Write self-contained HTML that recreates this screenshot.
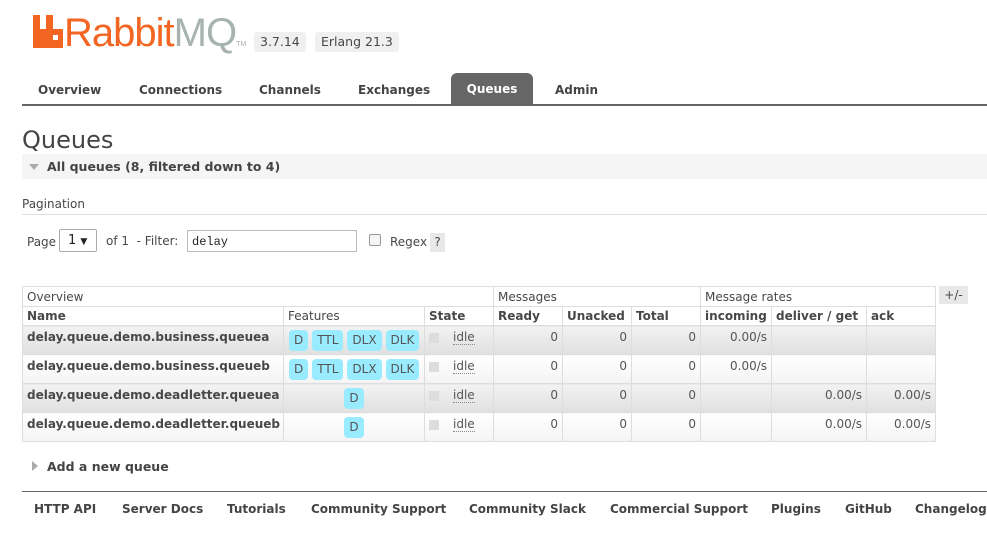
<!DOCTYPE html>
<html><head><meta charset="utf-8"><style>
*{margin:0;padding:0;box-sizing:border-box}
body{width:987px;height:535px;background:#fff;font-family:"DejaVu Sans","Liberation Sans",sans-serif;color:#484848;position:relative;overflow:hidden;font-size:12px}
.a{position:absolute;white-space:nowrap}
.logo{left:33px;top:13px;font-family:"Liberation Sans",sans-serif;font-size:40px;letter-spacing:-1px;line-height:40px}
.badge{top:32px;height:20px;background:#f0f0f0;border-radius:3px;font-size:12.5px;line-height:20px;padding:0 6px;color:#484848}
.nav{top:74px;height:32px;font-weight:bold;font-size:12px;line-height:32px;color:#444}
.navline{left:22px;top:104px;width:965px;height:2px;background:#666}
table{position:absolute;left:22px;top:286px;border-collapse:collapse;table-layout:fixed;width:913px}
td,th{border:1px solid #ddd;padding:0 4px;font-size:12px;white-space:nowrap;overflow:hidden}
th{text-align:left}
tr.h1 td{height:20px;font-weight:normal}
tr.h2 th{height:19px}
tr.r td{height:29px;vertical-align:top;padding-top:4px}
tr.g td{background:linear-gradient(#f2f2f2,#e0e0e0)}
tr.w td{background:linear-gradient(#fff,#f4f4f4)}
.n{text-align:right;color:#555}
.f{display:inline-block;background:#99ebff;border-radius:4px;height:21px;line-height:21px;padding:0 5px;margin-right:4px;color:#555;font-size:12px}
.st{display:inline-block;width:10px;height:10px;background:#ddd;margin-right:14px;vertical-align:-2px}
.idle{border-bottom:1px dotted #888;color:#555}
.foot{top:502px;font-weight:bold;font-size:12px;color:#444}
</style></head><body>
<div class="a logo"><svg width="30" height="33" viewBox="0 0 30 33" style="vertical-align:-2px;margin-right:1px"><path d="M0 0h7v14h6V0h7v14h0v0h0V14H30V33H0Z" fill="#f26522"/><rect x="20" y="20" width="5" height="5" fill="#fff"/></svg><span style="color:#f26522">Rabbit</span><span style="color:#a7b3ae">MQ</span><span style="font-size:7px;color:#aaa;letter-spacing:0">TM</span></div>
<div class="a badge" style="left:254px">3.7.14</div>
<div class="a badge" style="left:315px">Erlang 21.3</div>
<div class="a nav" style="left:38px">Overview</div>
<div class="a nav" style="left:139px">Connections</div>
<div class="a nav" style="left:259px">Channels</div>
<div class="a nav" style="left:358px">Exchanges</div>
<div class="a nav" style="left:451px;top:73px;height:32px;width:82px;background:#666;color:#fff;text-align:center;border-radius:6px 6px 0 0;line-height:33px">Queues</div>
<div class="a nav" style="left:555px">Admin</div>
<div class="a navline"></div>
<div class="a" style="left:22px;top:126px;font-size:24px;color:#444">Queues</div>
<div class="a" style="left:22px;top:154px;width:965px;height:25px;background:#f5f5f5"></div>
<div class="a" style="left:29px;top:164px;width:0;height:0;border-left:5px solid transparent;border-right:5px solid transparent;border-top:6px solid #aaa"></div>
<div class="a" style="left:47px;top:159px;font-weight:bold;font-size:12.5px;color:#444">All queues (8, filtered down to 4)</div>
<div class="a" style="left:22px;top:197px;font-size:12px">Pagination</div>
<div class="a" style="left:22px;top:214px;width:965px;height:1px;background:#ddd"></div>
<div class="a" style="left:27px;top:235px">Page</div>
<div class="a" style="left:59px;top:229px;width:38px;height:23px;border:1px solid #aaa;border-radius:2px;padding:3px 0 0 8px;font-size:13px;color:#222">1 <span style="font-size:9px">▼</span></div>
<div class="a" style="left:106px;top:234px">of 1 &nbsp;- Filter:</div>
<div class="a" style="left:187px;top:230px;width:170px;height:22px;border:1px solid #bbb;padding:4px 4px;font-family:'Liberation Mono',monospace;font-size:12px;color:#222">delay</div>
<div class="a" style="left:369px;top:234px;width:12px;height:12px;border:1px solid #999;border-radius:2px;background:#f5f5f5"></div>
<div class="a" style="left:390px;top:235px">Regex</div>
<div class="a" style="left:430px;top:233px;width:15px;height:19px;background:#e8e8e8;text-align:center;line-height:19px">?</div>
<table>
<colgroup><col style="width:261px"><col style="width:141px"><col style="width:69px"><col style="width:69px"><col style="width:69px"><col style="width:69px"><col style="width:71px"><col style="width:95px"><col style="width:69px"></colgroup>
<tr class="h1"><td colspan="3">Overview</td><td colspan="3">Messages</td><td colspan="3">Message rates</td></tr>
<tr class="h2"><th>Name</th><th style="font-weight:normal">Features</th><th>State</th><th>Ready</th><th>Unacked</th><th>Total</th><th>incoming</th><th>deliver / get</th><th>ack</th></tr>
<tr class="r g"><td><b>delay.queue.demo.business.queuea</b></td><td style="padding-left:5px"><span class="f">D</span><span class="f">TTL</span><span class="f">DLX</span><span class="f">DLK</span></td><td><span class="st"></span><span class="idle">idle</span></td><td class="n">0</td><td class="n">0</td><td class="n">0</td><td class="n">0.00/s</td><td></td><td></td></tr>
<tr class="r w"><td><b>delay.queue.demo.business.queueb</b></td><td style="padding-left:5px"><span class="f">D</span><span class="f">TTL</span><span class="f">DLX</span><span class="f">DLK</span></td><td><span class="st"></span><span class="idle">idle</span></td><td class="n">0</td><td class="n">0</td><td class="n">0</td><td class="n">0.00/s</td><td></td><td></td></tr>
<tr class="r g"><td><b>delay.queue.demo.deadletter.queuea</b></td><td style="text-align:center"><span class="f" style="margin:0">D</span></td><td><span class="st"></span><span class="idle">idle</span></td><td class="n">0</td><td class="n">0</td><td class="n">0</td><td></td><td class="n">0.00/s</td><td class="n">0.00/s</td></tr>
<tr class="r w"><td><b>delay.queue.demo.deadletter.queueb</b></td><td style="text-align:center"><span class="f" style="margin:0">D</span></td><td><span class="st"></span><span class="idle">idle</span></td><td class="n">0</td><td class="n">0</td><td class="n">0</td><td></td><td class="n">0.00/s</td><td class="n">0.00/s</td></tr>
</table>
<div class="a" style="left:939px;top:286px;width:29px;height:18px;background:#e8e8e8;text-align:center;line-height:18px">+/-</div>
<div class="a" style="left:32px;top:461px;width:0;height:0;border-top:5px solid transparent;border-bottom:5px solid transparent;border-left:6px solid #aaa"></div>
<div class="a" style="left:47px;top:459px;font-weight:bold;font-size:12.5px;color:#444">Add a new queue</div>
<div class="a" style="left:22px;top:491px;width:965px;height:1px;background:#666"></div>
<div class="a foot" style="left:34px">HTTP API</div>
<div class="a foot" style="left:122px">Server Docs</div>
<div class="a foot" style="left:227px">Tutorials</div>
<div class="a foot" style="left:311px">Community Support</div>
<div class="a foot" style="left:469px">Community Slack</div>
<div class="a foot" style="left:610px">Commercial Support</div>
<div class="a foot" style="left:771px">Plugins</div>
<div class="a foot" style="left:845px">GitHub</div>
<div class="a foot" style="left:915px">Changelog</div>
</body></html>
